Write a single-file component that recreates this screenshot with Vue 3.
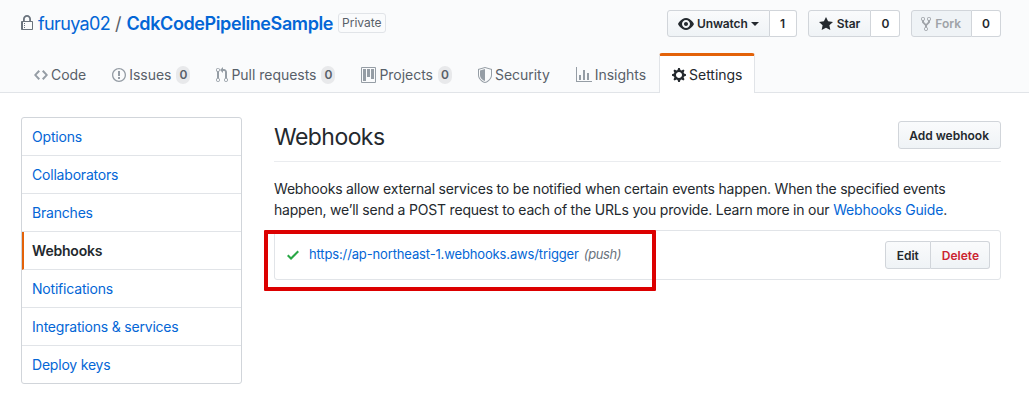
<script setup>
const tabs = [
  { label: 'Code', w: 14, vb: '0 0 14 16', d: 'M9.5 3L8 4.5 11.5 8 8 11.5 9.5 13 14 8 9.5 3zm-5 0L0 8l4.5 5L6 11.5 2.5 8 6 4.5 4.5 3z' },
  { label: 'Issues', count: 0, w: 14, vb: '0 0 14 16', d: 'M7 2.3c3.14 0 5.7 2.56 5.7 5.7s-2.56 5.7-5.7 5.7A5.71 5.71 0 011.3 8c0-3.14 2.56-5.7 5.7-5.7zM7 1C3.14 1 0 4.14 0 8s3.14 7 7 7 7-3.14 7-7-3.14-7-7-7zm1 3H6v5h2V4zm0 6H6v2h2v-2z' },
  { label: 'Pull requests', count: 0, w: 12, vb: '0 0 12 16', d: 'M11 11.28V5c-.03-.78-.34-1.47-.94-2.06C9.46 2.35 8.78 2.03 8 2H7V0L4 3l3 3V4h1c.27.02.48.11.69.31.21.2.3.42.31.69v6.28A1.993 1.993 0 0010 15a1.993 1.993 0 001-3.72zm-1 2.92c-.66 0-1.2-.55-1.2-1.2 0-.65.55-1.2 1.2-1.2.65 0 1.2.55 1.2 1.2 0 .65-.55 1.2-1.2 1.2zM4 3c0-1.11-.89-2-2-2a1.993 1.993 0 00-1 3.72v6.56A1.993 1.993 0 002 15a1.993 1.993 0 001-3.72V4.72c.59-.34 1-.98 1-1.72zm-.8 10c0 .66-.55 1.2-1.2 1.2-.65 0-1.2-.55-1.2-1.2 0-.65.55-1.2 1.2-1.2.65 0 1.2.55 1.2 1.2zM2 4.2C1.34 4.2.8 3.65.8 3c0-.65.55-1.2 1.2-1.2.65 0 1.2.55 1.2 1.2 0 .65-.55 1.2-1.2 1.2z' },
  { label: 'Projects', count: 0, w: 15, vb: '0 0 15 16', d: 'M10 12h3V2h-3v10zm-4-2h3V2H6v8zm-4 4h3V2H2v12zm-1 1h13V1H1v14zM14 0H1a1 1 0 00-1 1v14a1 1 0 001 1h13a1 1 0 001-1V1a1 1 0 00-1-1z' },
  { label: 'Security', w: 14, vb: '0 0 14 16', d: 'M0 2l7-2 7 2v6.02C14 12.69 8.69 16 7 16c-1.69 0-7-3.31-7-7.98V2zm1 .75L7 1l6 1.75v5.268C13 12.104 8.449 15 7 15c-1.449 0-6-2.896-6-6.982V2.75zm1 .75L7 2v12c-1.207 0-5-2.482-5-5.985V3.5z' },
  { label: 'Insights', w: 16, vb: '0 0 16 16', d: 'M16 14v1H0V0h1v14h15zM5 13H3V8h2v5zm4 0H7V3h2v10zm4 0h-2V6h2v7z' },
  { label: 'Settings', selected: true, w: 14, vb: '0 0 14 16', d: 'M14 8.77v-1.6l-1.94-.64-.45-1.09.88-1.84-1.13-1.13-1.81.91-1.09-.45-.69-1.92h-1.6l-.63 1.94-1.11.45-1.84-.88-1.13 1.13.91 1.81-.45 1.09L0 7.23v1.59l1.94.64.45 1.09-.88 1.84 1.13 1.13 1.81-.91 1.09.45.69 1.92h1.59l.63-1.94 1.11-.45 1.84.88 1.13-1.13-.92-1.81.47-1.09L14 8.75v.02zM7 11c-1.66 0-3-1.34-3-3s1.34-3 3-3 3 1.34 3 3-1.34 3-3 3z' },
]
const menu = ['Options', 'Collaborators', 'Branches', 'Webhooks', 'Notifications', 'Integrations & services', 'Deploy keys']
</script>

<template>
  <div class="page">
    <header class="head">
      <div class="top">
        <h1 class="repo">
          <svg class="lock" width="12" height="16" viewBox="0 0 12 16"><path fill="#6a737d" fill-rule="evenodd" d="M4 13H3v-1h1v1zm8-6v7c0 .55-.45 1-1 1H1c-.55 0-1-.45-1-1V7c0-.55.45-1 1-1h1V4c0-2.2 1.8-4 4-4s4 1.8 4 4v2h1c.55 0 1 .45 1 1zM3.8 6h4.41V4c0-1.22-.98-2.2-2.2-2.2-1.22 0-2.2.98-2.2 2.2v2H3.8zM11 7H2v7h9V7zM4 8H3v1h1V8zm0 2H3v1h1v-1z"/></svg>
          <a class="owner">furuya02</a>
          <span class="sep">/</span>
          <a class="name">CdkCodePipelineSample</a>
          <span class="private">Private</span>
        </h1>
        <div class="actions">
          <div class="pair">
            <span class="btn left watch">
              <svg width="16" height="16" viewBox="0 0 16 16"><path fill="#24292e" fill-rule="evenodd" d="M8.06 2C3 2 0 8 0 8s3 6 8.06 6C13 14 16 8 16 8s-3-6-7.94-6zM8 12c-2.2 0-4-1.78-4-4 0-2.2 1.8-4 4-4 2.22 0 4 1.8 4 4 0 2.22-1.78 4-4 4zm2-4c0 1.11-.89 2-2 2-1.11 0-2-.89-2-2 0-1.11.89-2 2-2 1.11 0 2 .89 2 2z"/></svg>
              Unwatch<i class="caret"></i>
            </span>
            <span class="num">1</span>
          </div>
          <div class="pair">
            <span class="btn left">
              <svg width="14" height="16" viewBox="0 0 14 16"><path fill="#24292e" d="M14 6l-4.9-.64L7 1 4.9 5.36 0 6l3.6 3.26L2.67 14 7 11.67 11.33 14l-.93-4.74L14 6z"/></svg>
              Star
            </span>
            <span class="num">0</span>
          </div>
          <div class="pair">
            <span class="btn left disabled">
              <svg width="10" height="16" viewBox="0 0 10 16"><path fill="currentColor" fill-rule="evenodd" d="M8 1a1.993 1.993 0 00-1 3.72V6L5 8 3 6V4.72A1.993 1.993 0 002 1a1.993 1.993 0 00-1 3.72V6.5l3 3v1.78A1.993 1.993 0 005 15a1.993 1.993 0 001-3.72V9.5l3-3V4.72A1.993 1.993 0 008 1zM2 4.2C1.34 4.2.8 3.65.8 3c0-.65.55-1.2 1.2-1.2.65 0 1.2.55 1.2 1.2 0 .65-.55 1.2-1.2 1.2zm3 10c-.66 0-1.2-.55-1.2-1.2 0-.65.55-1.2 1.2-1.2.65 0 1.2.55 1.2 1.2 0 .65-.55 1.2-1.2 1.2zm3-10c-.66 0-1.2-.55-1.2-1.2 0-.65.55-1.2 1.2-1.2.65 0 1.2.55 1.2 1.2 0 .65-.55 1.2-1.2 1.2z"/></svg>
              Fork
            </span>
            <span class="num">0</span>
          </div>
        </div>
      </div>
      <nav class="tabs">
        <a v-for="t in tabs" :key="t.label" class="tab" :class="{ selected: t.selected }">
          <svg :width="t.w" height="16" :viewBox="t.vb"><path fill="currentColor" fill-rule="evenodd" :d="t.d"/></svg>
          <span class="tlabel">{{ t.label }}</span>
          <span v-if="t.count !== undefined" class="counter">{{ t.count }}</span>
        </a>
      </nav>
    </header>

    <main class="body">
      <aside class="menu">
        <a v-for="m in menu" :key="m" class="item" :class="{ active: m === 'Webhooks' }">{{ m }}</a>
      </aside>
      <section class="content">
        <div class="subhead">
          <h2>Webhooks</h2>
          <span class="btn small solo">Add webhook</span>
        </div>
        <p class="intro">Webhooks allow external services to be notified when certain events happen. When the specified events happen, we’ll send a POST request to each of the URLs you provide. Learn more in our <a>Webhooks Guide</a>.</p>
        <div class="hook">
          <svg width="12" height="16" viewBox="0 0 12 16"><path fill="#28a745" d="M12 5l-8 8-4-4 1.5-1.5L4 10l6.5-6.5L12 5z"/></svg>
          <a class="url">https://ap-northeast-1.webhooks.aws/trigger</a>
          <em class="evt">(push)</em>
          <div class="group">
            <span class="btn small gl">Edit</span>
            <span class="btn small gr">Delete</span>
          </div>
          <div class="mark"></div>
        </div>
      </section>
    </main>
  </div>
</template>

<style>
html, body { margin: 0; background: #fff; }
</style>

<style scoped>
.page {
  width: 1029px;
  height: 405px;
  overflow: hidden;
  font-family: Inter, "Liberation Sans", Arial, sans-serif;
  font-size: 14px;
  color: #24292e;
  background: #fff;
}
a { color: #0366d6; text-decoration: none; }
.head {
  height: 93px;
  box-sizing: border-box;
  background: #fafbfc;
  border-bottom: 1px solid #e1e4e8;
  padding: 0 28px 0 21px;
}
.top {
  height: 53px;
  display: flex;
  justify-content: space-between;
}
.repo {
  margin: 0;
  height: 46px;
  display: flex;
  align-items: center;
  font-size: 18px;
  font-weight: 400;
}
.lock { margin-right: 5px; }
.owner { margin-right: 5px; letter-spacing: -.65px; }
.sep { margin-right: 5px; color: #586069; }
.name { font-weight: 600; letter-spacing: -.4px; }
.private {
  margin-left: 5px;
  height: 20px;
  box-sizing: border-box;
  line-height: 18px;
  padding: 0 3px;
  border: 1px solid #e1e4e8;
  border-radius: 3px;
  font-size: 12px;
  color: #586069;
}
.actions { display: flex; gap: 11px; padding-top: 10px; }
.pair { display: flex; height: 27px; }
.btn {
  display: inline-flex;
  align-items: center;
  box-sizing: border-box;
  background: linear-gradient(#fafbfc, #eff3f6);
  border: 1px solid #d1d5da;
  border-radius: 3px;
  font-size: 12px;
  font-weight: 600;
  color: #24292e;
}
.left { height: 27px; padding: 0 10px; gap: 4px; border-radius: 3px 0 0 3px; }
.watch { gap: 3px; letter-spacing: -.15px; }
.disabled { color: #9fa3a8; background: #eff3f6; padding: 0 10px 0 9px; }
.num {
  min-width: 27px;
  box-sizing: border-box;
  padding: 0 10px;
  line-height: 25px;
  border: 1px solid #d1d5da;
  border-left: 0;
  border-radius: 0 3px 3px 0;
  background: #fff;
  font-size: 12px;
  font-weight: 600;
  text-align: center;
}
.caret {
  width: 0;
  height: 0;
  border: 4px solid transparent;
  border-top-color: #24292e;
  border-bottom: 0;
}
.tabs { display: flex; height: 40px; }
.tab {
  display: flex;
  align-items: center;
  gap: 3px;
  box-sizing: border-box;
  height: 40px;
  padding: 0 12px;
  color: #586069;
  border: 1px solid transparent;
  border-top-width: 3px;
  border-bottom: 0;
}
.tlabel { letter-spacing: -.03px; }
.tab svg { color: #959da5; }
.selected {
  background: #fff;
  color: #24292e;
  border-color: #e1e4e8;
  border-top-color: #e36209;
  border-radius: 3px 3px 0 0;
}
.selected svg { color: #24292e; }
.counter {
  margin-left: 2px;
  min-width: 14px;
  height: 18px;
  line-height: 18px;
  padding: 0 3px;
  box-sizing: border-box;
  text-align: center;
  background: rgba(27, 31, 35, .08);
  border-radius: 9px;
  font-size: 12px;
  font-weight: 600;
}
.body {
  display: flex;
  align-items: flex-start;
  gap: 32px;
  padding: 24px 28px 0 21px;
}
.menu {
  width: 221px;
  flex: none;
  box-sizing: border-box;
  border: 1px solid #d1d5da;
  border-radius: 3px;
  letter-spacing: -.2px;
}
.item {
  display: block;
  height: 38px;
  box-sizing: border-box;
  line-height: 38px;
  padding-left: 10px;
  border-bottom: 1px solid #e1e4e8;
}
.item:last-child { border-bottom: 0; height: 37px; }
.active {
  color: #24292e;
  font-weight: 600;
  border-left: 2px solid #e36209;
  padding-left: 8px;
}
.content { flex: 1; min-width: 0; }
.subhead {
  height: 44px;
  display: flex;
  align-items: flex-start;
  justify-content: space-between;
  border-bottom: 1px solid #eaecef;
}
h2 { margin: 0; font-size: 23px; font-weight: 400; line-height: 40px; letter-spacing: -.55px; }
.small { height: 28px; padding: 0 10px; }
.solo { margin-top: 4px; padding: 0 11px 0 10px; }
.intro { margin: 16px 0 10px; line-height: 21px; letter-spacing: -.2px; }
.hook {
  position: relative;
  display: flex;
  align-items: center;
  height: 50px;
  box-sizing: border-box;
  border: 1px solid #e1e4e8;
  border-radius: 3px;
  padding: 0 10px 0 12px;
  font-size: 13px;
}
.url { margin-left: 10px; margin-bottom: 2px; letter-spacing: -.14px; }
.evt { margin-left: 5px; margin-bottom: 2px; color: #6a737d; letter-spacing: -.4px; }
.group { margin-left: auto; display: flex; }
.gl { border-radius: 3px 0 0 3px; padding: 0 11px; }
.gr { border-radius: 0 3px 3px 0; border-left: 0; padding: 0 10px 0 11px; color: #cb2431; }
.mark {
  position: absolute;
  left: -11px;
  top: -1px;
  width: 392px;
  height: 61px;
  box-sizing: border-box;
  border: 4px solid #dc0000;
  border-radius: 1px;
  pointer-events: none;
}
</style>
